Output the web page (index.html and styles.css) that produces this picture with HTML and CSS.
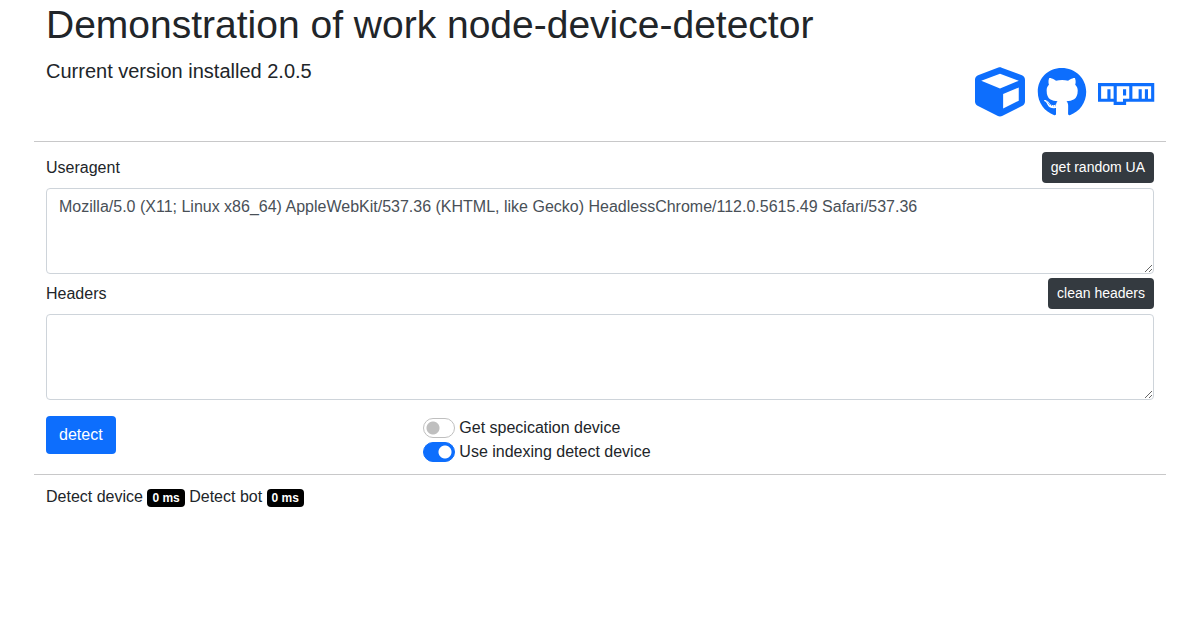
FILE: index.html
```html
<!DOCTYPE html>
<html lang="en">
<head>
<meta charset="UTF-8" />
<meta name="viewport" content="width=device-width, initial-scale=1" />
<title>Demonstration of work node-device-detector</title>
<link rel="stylesheet" href="styles.css">
</head>
<body>
<div class="container">
<header class="header">
<h1>Demonstration of work node-device-detector</h1>
<p class="version">Current version installed 2.0.5</p>
<nav class="links">
<a href="#" aria-label="Sandbox">
<svg class="icon" viewBox="0 0 512 512"><path d="M239.1 6.3l-208 78c-18.7 7-31.1 25-31.1 45v225.1c0 18.2 10.3 34.8 26.5 42.9l208 104c13.5 6.8 29.4 6.8 42.9 0l208-104c16.3-8.1 26.5-24.8 26.5-42.9V129.3c0-20-12.4-37.9-31.1-44.9l-208-78C262 2.2 250 2.2 239.1 6.3zM256 68.4l192 72v1.1l-192 78-192-78v-1.1l192-72zm32 356V275.5l160-65v133.9l-160 80z"/></svg>
</a>
<a href="#" aria-label="GitHub">
<svg class="icon" viewBox="-8 -2 496 512"><path d="M165.9 397.4c0 2-2.3 3.6-5.2 3.6-3.3.3-5.6-1.3-5.6-3.6 0-2 2.3-3.6 5.2-3.6 3-.3 5.6 1.3 5.6 3.6zm-31.1-4.5c-.7 2 1.3 4.3 4.3 4.9 2.6 1 5.6 0 6.2-2s-1.3-4.3-4.3-5.2c-2.6-.7-5.5.3-6.2 2.3zm44.2-1.7c-2.9.7-4.9 2.6-4.6 4.9.3 2 2.9 3.3 5.9 2.6 2.9-.7 4.9-2.6 4.6-4.6-.3-1.9-3-3.2-5.9-2.9zM244.8 8C106.1 8 0 113.3 0 252c0 110.9 69.8 205.8 169.5 239.2 12.8 2.3 17.3-5.6 17.3-12.1 0-6.2-.3-40.4-.3-61.4 0 0-70 15-84.7-29.8 0 0-11.4-29.1-27.8-36.6 0 0-22.9-15.7 1.6-15.4 0 0 24.9 2 38.6 25.8 21.9 38.6 58.6 27.5 72.9 20.9 2.3-16 8.8-27.1 16-33.7-55.9-6.2-112.3-14.3-112.3-110.5 0-27.5 7.6-41.3 23.6-58.9-2.6-6.5-11.1-33.3 2.6-67.9 20.9-6.5 69 27 69 27 20-5.6 41.5-8.5 62.8-8.5s42.8 2.9 62.8 8.5c0 0 48.1-33.6 69-27 13.7 34.7 5.2 61.4 2.6 67.9 16 17.7 25.8 31.5 25.8 58.9 0 96.5-58.9 104.2-114.8 110.5 9.2 7.9 17 22.9 17 46.4 0 33.7-.3 75.4-.3 83.6 0 6.5 4.6 14.4 17.3 12.1C428.2 457.8 496 362.9 496 252 496 113.3 383.5 8 244.8 8zM97.2 352.9c-1.3 1-1 3.3.7 5.2 1.6 1.6 3.9 2.3 5.2 1 1.3-1 1-3.3-.7-5.2-1.6-1.6-3.9-2.3-5.2-1zm-10.8-8.1c-.7 1.3.3 2.9 2.3 3.9 1.6 1 3.6.7 4.3-.7.7-1.3-.3-2.9-2.3-3.9-2-.6-3.6-.3-4.3.7zm32.4 35.6c-1.6 1.3-1 4.3 1.3 6.2 2.3 2.3 5.2 2.6 6.5 1 1.3-1.3.7-4.3-1.3-6.2-2.2-2.3-5.2-2.6-6.5-1zm-11.4-14.7c-1.6 1-1.6 3.6 0 5.9 1.6 2.3 4.3 3.3 5.6 2.3 1.6-1.3 1.6-3.9 0-6.2-1.4-2.3-4-3.3-5.6-2z"/></svg>
</a>
<a href="#" aria-label="npm">
<svg class="icon" viewBox="0 -4 576 512"><path d="M288 288h-32v-64h32v64zm288-128v192H288v32H160v-32H0V160h576zm-416 32H32v128h64v-96h32v96h32V192zm160 0H192v160h64v-32h64V192zm224 0H352v128h64v-96h32v96h32v-96h32v96h32V192z"/></svg>
</a>
</nav>
</header>
<form class="form" onsubmit="return false">
<div class="field-head">
<label for="useragent">Useragent</label>
<button type="button" class="btn btn-dark">get random UA</button>
</div>
<textarea id="useragent" rows="3" spellcheck="false">Mozilla/5.0 (X11; Linux x86_64) AppleWebKit/537.36 (KHTML, like Gecko) HeadlessChrome/112.0.5615.49 Safari/537.36</textarea>
<div class="field-head">
<label for="headers">Headers</label>
<button type="button" class="btn btn-dark" onclick="cleanHeaders()">clean headers</button>
</div>
<textarea id="headers" rows="3" spellcheck="false"></textarea>
<div class="actions">
<div><button type="submit" class="btn btn-primary">detect</button></div>
<div>
<div class="switch"><input type="checkbox" id="spec"><label for="spec">Get specication device</label></div>
<div class="switch"><input type="checkbox" id="indexing" checked><label for="indexing">Use indexing detect device</label></div>
</div>
</div>
</form>
<div class="result">
Detect device <span class="badge">0 ms</span> Detect bot <span class="badge">0 ms</span>
</div>
</div>
<script>
    function cleanHeaders() {
      document.getElementById('headers').value = '';
    }
</script>
</body>
</html>
```

FILE: styles.css
```css
* { box-sizing: border-box; }

body { margin: 0; font-family: "Liberation Sans", Arial, sans-serif; font-size: 16px; line-height: 24px; color: #212529; background: #fff; }

.container { padding: 0 34px; }

.header { padding: 0 12px 24px; border-bottom: 1px solid #c8c8c9; }

h1 { margin: 0 0 6px; font-size: 39px; font-weight: normal; line-height: 50px; }

.version { margin: 0; font-size: 20px; line-height: 30px; }

.links { display: flex; justify-content: flex-end; gap: 12px; margin-top: -19px; }

.links a { display: block; color: #0d6efd; }

.icon { display: block; height: 50px; overflow: visible; fill: currentColor; }

.form { padding: 10px 12px; border-bottom: 1px solid #c8c8c9; }

.field-head { display: flex; justify-content: space-between; align-items: center; margin-bottom: 5px; }

textarea { display: block; width: 100%; height: 86px; margin-bottom: 4px; padding: 6px 12px; border: 1px solid #ced4da; border-radius: 4px; font: inherit; color: #495057; background: #fff; resize: vertical; }

.btn { border: 1px solid transparent; border-radius: 4px; font-family: inherit; color: #fff; cursor: pointer; }

.btn-dark { padding: 4px 8px; font-size: 14px; line-height: 21px; background: #343a40; }

.btn-primary { padding: 6px 12px; font-size: 16px; line-height: 24px; background: #0d6efd; }

.actions { display: grid; grid-template-columns: 1fr 2fr; gap: 12px; padding-top: 12px; }

.switch { display: flex; align-items: center; gap: 4px; height: 24px; }

.switch input { appearance: none; width: 32px; height: 20px; margin: 0; border: 1px solid #bfbfbf; border-radius: 10px; background: #fff radial-gradient(circle at 9px 9px, #bfbfbf 6px, transparent 7px); }

.switch input:checked { border-color: #0d6efd; background: #0d6efd radial-gradient(circle at 21px 9px, #fff 6px, transparent 7px); }

.result { padding: 10px 12px; }

.badge { display: inline-block; padding: 3px 5px; border-radius: 4px; font-size: 12px; font-weight: bold; line-height: 12px; color: #fff; background: #000; }
```
